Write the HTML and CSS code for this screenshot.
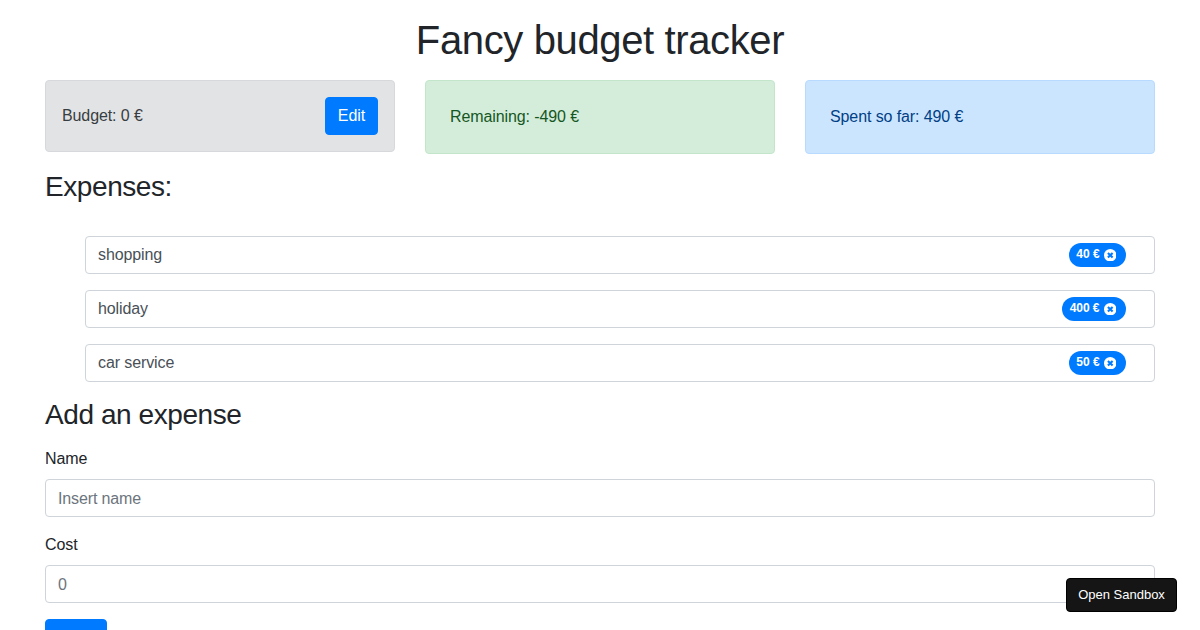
FILE: index.html
```html
<!DOCTYPE html>
<html lang="en">
<head>
<meta charset="utf-8">
<title>Fancy budget tracker</title>
<link rel="stylesheet" href="styles.css">
</head>
<body>
<div class="container">
  <h1 class="title">Fancy budget tracker</h1>
  <div class="cards">
    <div class="card card-budget"><span>Budget: 0 €</span><button class="btn" type="button">Edit</button></div>
    <div class="card card-remaining">Remaining: -490 €</div>
    <div class="card card-spent">Spent so far: 490 €</div>
  </div>
  <h3 class="heading-expenses">Expenses:</h3>
  <ul class="expenses">
    <li class="expense"><span>shopping</span><span class="badge">40 €<svg class="x-icon" viewBox="0 0 24 24"><circle cx="12" cy="12" r="12" fill="#fff"/><path d="M7.5 7.5l9 9M16.5 7.5l-9 9" stroke="#007bff" stroke-width="4" fill="none"/></svg></span></li>
    <li class="expense"><span>holiday</span><span class="badge">400 €<svg class="x-icon" viewBox="0 0 24 24"><circle cx="12" cy="12" r="12" fill="#fff"/><path d="M7.5 7.5l9 9M16.5 7.5l-9 9" stroke="#007bff" stroke-width="4" fill="none"/></svg></span></li>
    <li class="expense"><span>car service</span><span class="badge">50 €<svg class="x-icon" viewBox="0 0 24 24"><circle cx="12" cy="12" r="12" fill="#fff"/><path d="M7.5 7.5l9 9M16.5 7.5l-9 9" stroke="#007bff" stroke-width="4" fill="none"/></svg></span></li>
  </ul>
  <h3 class="heading-add">Add an expense</h3>
  <form class="form">
    <div class="field"><label class="label" for="name">Name</label><input class="input" id="name" type="text" placeholder="Insert name"></div>
    <div class="field"><label class="label" for="cost">Cost</label><input class="input" id="cost" type="text" placeholder="0"></div>
    <button class="btn btn-save" type="button">Save</button>
  </form>
</div>
<a class="sandbox">Open Sandbox</a>
</body>
</html>
```
FILE: styles.css
```css
* { box-sizing: border-box; }
html, body { margin: 0; height: 630px; overflow: hidden; }
body {
  font-family: "Liberation Sans", Arial, sans-serif;
  font-size: 16px;
  line-height: 1.5;
  letter-spacing: -0.1px;
  color: #212529;
  background: #fff;
}
.container { width: 1140px; margin: 0 auto; padding: 0 15px; }
.title {
  margin: 16px 0 8px;
  font-size: 40px;
  font-weight: 500;
  line-height: 1.2;
  letter-spacing: -0.37px;
  text-align: center;
}
.cards {
  display: grid;
  grid-template-columns: repeat(3, 350px);
  gap: 30px;
  margin-top: 16px;
  align-items: start;
}
.card { border: 1px solid transparent; border-radius: 4px; padding: 24px; }
.card-budget {
  display: flex;
  justify-content: space-between;
  align-items: center;
  padding: 16px;
  background: #e2e3e5;
  border-color: #d6d8db;
  color: #383d41;
}
.card-remaining { background: #d4edda; border-color: #c3e6cb; color: #155724; }
.card-spent { background: #cce5ff; border-color: #b8daff; color: #004085; }
.btn {
  font: inherit;
  letter-spacing: -0.1px;
  height: 38px;
  padding: 6px 12px;
  color: #fff;
  background: #007bff;
  border: 1px solid #007bff;
  border-radius: 4px;
}
h3 { margin: 0 0 8px; font-size: 28px; font-weight: 500; line-height: 1.2; letter-spacing: -0.42px; }
.heading-expenses { margin-top: 16px; }
.heading-add { margin-top: 16px; }
.expenses { list-style: none; margin: 32px 0 0; padding: 0 0 0 40px; }
.expense {
  display: flex;
  justify-content: space-between;
  align-items: center;
  height: 38px;
  margin-bottom: 16px;
  padding: 0 28px 0 12px;
  border: 1px solid #ced4da;
  border-radius: 4px;
  color: #495057;
}
.expense:last-child { margin-bottom: 0; }
.badge {
  display: inline-flex;
  align-items: center;
  height: 24px;
  padding: 0 10px 2px 7.5px;
  border-radius: 12px;
  background: #007bff;
  color: #fff;
  font-size: 12px;
  font-weight: 700;
  letter-spacing: -0.05px;
}
.x-icon { width: 12.5px; height: 12.5px; margin-left: 4px; margin-top: 3px; }
.form { margin-top: 16px; }
.field { margin-bottom: 16px; }
.label { display: block; margin-bottom: 8px; }
.input {
  display: block;
  width: 100%;
  height: 38px;
  padding: 7px 12px 5px;
  font: inherit;
  letter-spacing: -0.13px;
  color: #495057;
  background: #fff;
  border: 1px solid #ced4da;
  border-radius: 4px;
}
.input::placeholder { color: #6c757d; opacity: 1; }
.sandbox {
  position: fixed;
  left: 1066px;
  top: 578px;
  width: 111px;
  height: 34px;
  display: flex;
  align-items: center;
  justify-content: center;
  background: #151515;
  border: 1px solid #000;
  border-radius: 4px;
  color: #fff;
  font-size: 13px;
  letter-spacing: 0;
}
```
